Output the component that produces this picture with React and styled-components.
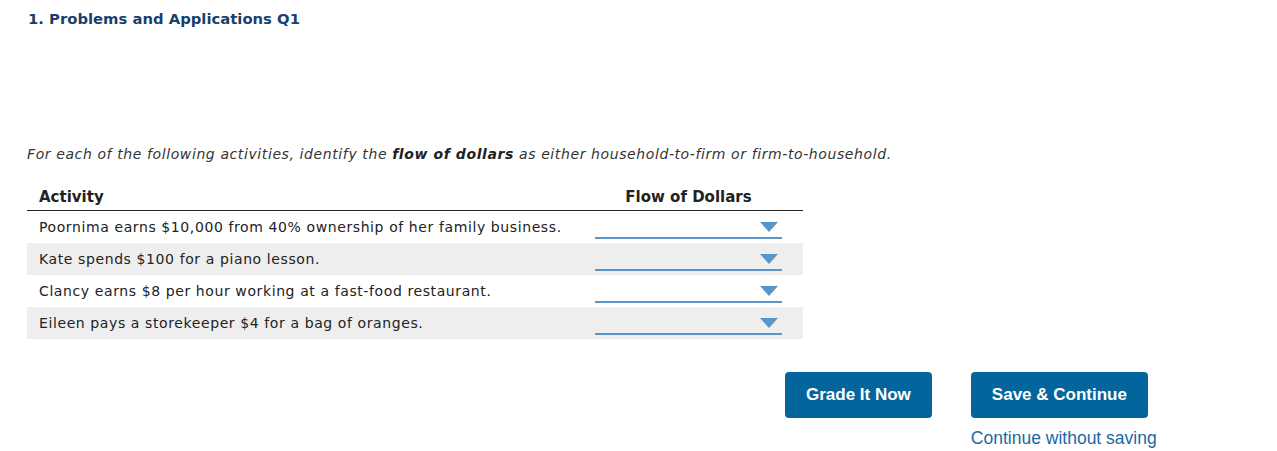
import React from "react";
import styled, { createGlobalStyle } from "styled-components";

const GlobalStyle = createGlobalStyle`
  body {
    margin: 0;
    background: #ffffff;
    font-family: "DejaVu Sans", Verdana, sans-serif;
    color: #222222;
  }
`;

const Page = styled.div`
  width: 1277px;
  height: 451px;
  padding: 10px 0 0 27px;
  box-sizing: border-box;
`;

const Title = styled.h1`
  margin: 0 0 0 1px;
  font-size: 14.8px;
  font-weight: bold;
  color: #1a3f6c;
  line-height: 18px;
`;

const Prompt = styled.p`
  margin: 117px 0 0;
  font-size: 14px;
  letter-spacing: 0.6px;
  font-style: italic;
  color: #333333;
  line-height: 18px;

  b {
    color: #222222;
  }
`;

const Table = styled.div`
  width: 776px;
  margin-top: 20px;
`;

const HeaderRow = styled.div`
  display: grid;
  grid-template-columns: 1fr 187px;
  column-gap: 21px;
  padding-right: 21px;
  height: 27px;
  align-items: center;
  border-bottom: 1px solid #222222;
  font-size: 15px;
  font-weight: bold;
  color: #222222;
`;

const HeadCell = styled.div`
  padding-left: ${(p) => (p.$center ? "0" : "12px")};
  text-align: ${(p) => (p.$center ? "center" : "left")};
`;

const Row = styled.div`
  display: grid;
  grid-template-columns: 1fr 187px;
  column-gap: 21px;
  padding-right: 21px;
  height: 32px;
  align-items: center;
  background: ${(p) => (p.$shaded ? "#eeeeee" : "#ffffff")};
  font-size: 14px;
  letter-spacing: 0.6px;
  color: #222222;
`;

const ActivityCell = styled.div`
  padding-left: 12px;
`;

const Select = styled.div`
  position: relative;
  align-self: start;
  height: 22px;
  margin-top: 4px;
  border-bottom: 2px solid #5a95c8;
`;

const Arrow = styled.svg`
  position: absolute;
  right: 4px;
  top: 7px;
`;

const Actions = styled.div`
  display: flex;
  gap: 39px;
  margin: 33px 0 0 758px;
`;

const ButtonCol = styled.div`
  display: flex;
  flex-direction: column;
  align-items: flex-start;
`;

const Button = styled.button`
  height: 46px;
  padding: 0 21px;
  border: none;
  border-radius: 4px;
  background: #04659c;
  color: #ffffff;
  font-family: "Liberation Sans", Arial, sans-serif;
  font-size: 17px;
  font-weight: bold;
  cursor: pointer;
`;

const LinkText = styled.a`
  margin-top: 10px;
  font-family: "Liberation Sans", Arial, sans-serif;
  font-size: 17.5px;
  color: #1a6aa2;
  text-decoration: none;
  cursor: pointer;
`;

const activities = [
  "Poornima earns $10,000 from 40% ownership of her family business.",
  "Kate spends $100 for a piano lesson.",
  "Clancy earns $8 per hour working at a fast-food restaurant.",
  "Eileen pays a storekeeper $4 for a bag of oranges.",
];

function Dropdown() {
  return (
    <Select>
      <Arrow width="18" height="10" viewBox="0 0 18 10">
        <polygon points="0,0 18,0 9,10" fill="#5a95c8" />
      </Arrow>
    </Select>
  );
}

export default function App() {
  return (
    <>
      <GlobalStyle />
      <Page>
        <Title>1. Problems and Applications Q1</Title>
        <Prompt>
          For each of the following activities, identify the <b>flow of dollars</b> as
          either household-to-firm or firm-to-household.
        </Prompt>
        <Table>
          <HeaderRow>
            <HeadCell>Activity</HeadCell>
            <HeadCell $center>Flow of Dollars</HeadCell>
          </HeaderRow>
          {activities.map((a, i) => (
            <Row key={a} $shaded={i % 2 === 1}>
              <ActivityCell>{a}</ActivityCell>
              <Dropdown />
            </Row>
          ))}
        </Table>
        <Actions>
          <Button>Grade It Now</Button>
          <ButtonCol>
            <Button>Save &amp; Continue</Button>
            <LinkText>Continue without saving</LinkText>
          </ButtonCol>
        </Actions>
      </Page>
    </>
  );
}
